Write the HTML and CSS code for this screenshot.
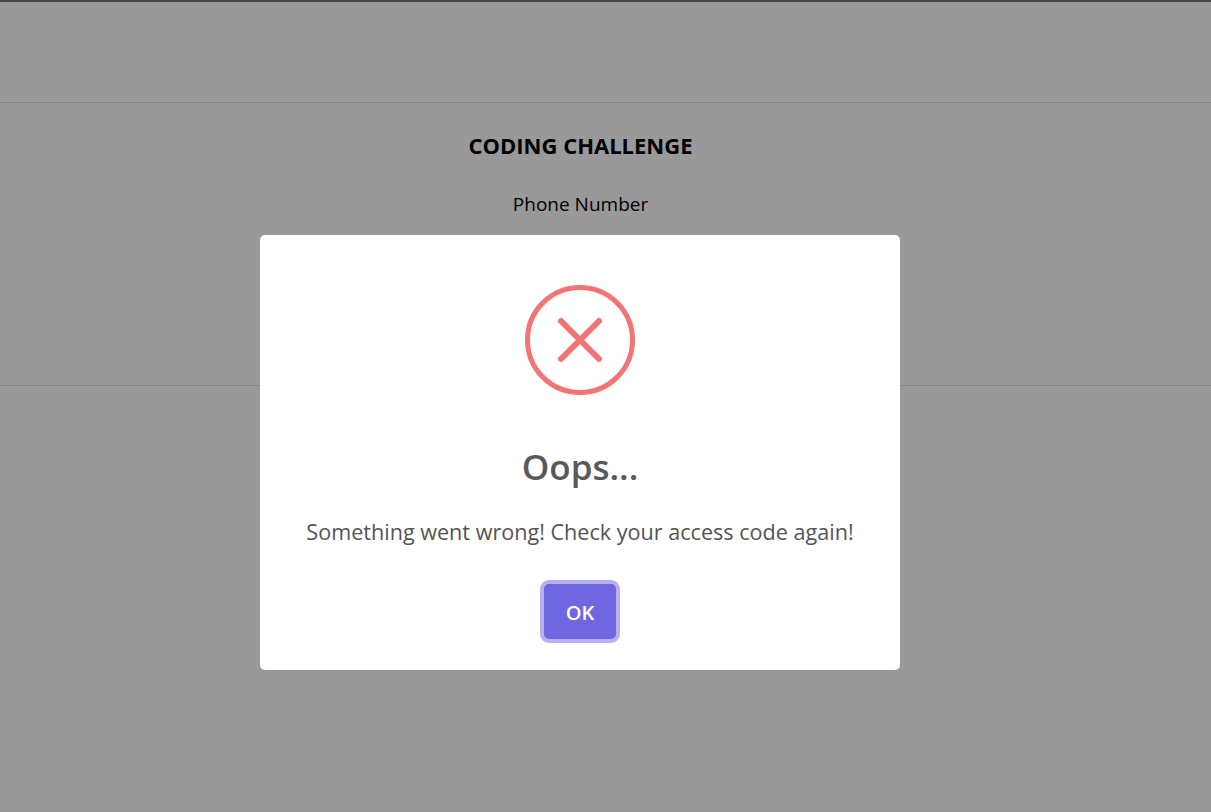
FILE: index.html
```html
<!DOCTYPE html>
<html lang="en">
<head>
    <meta charset="UTF-8">
    <title>Coding Challenge</title>
    <link rel="stylesheet" href="styles.css">
</head>
<body>
    <div class="topbar"></div>
    <div class="form-section">
        <h2>CODING CHALLENGE</h2>
        <p class="label">Phone Number</p>
    </div>

    <div class="overlay">
        <div class="modal">
            <svg class="error-icon" viewBox="0 0 110 110" width="110" height="110">
                <circle cx="55" cy="55" r="52.5" fill="none" stroke="#f27474" stroke-width="5"/>
                <path d="M36 36 L74 74 M74 36 L36 74" stroke="#f27474" stroke-width="6" stroke-linecap="round"/>
            </svg>
            <h3>Oops...</h3>
            <p class="message">Something went wrong! Check your access code again!</p>
            <button class="ok-btn">OK</button>
        </div>
    </div>
</body>
</html>
```

FILE: styles.css
```css
body {
    margin: 0;
    height: 812px;
    overflow: hidden;
    font-family: "Open Sans", "Noto Sans", sans-serif;
    background-color: #fff;
    color: #000;
}
.topbar {
    height: 103px;
    border-top: 2px solid #707070;
    box-sizing: border-box;
    border-bottom: 1px solid #dee2e6;
}
.form-section {
    height: 283px;
    box-sizing: border-box;
    border-bottom: 1px solid #dee2e6;
    text-align: center;
    padding: 28px 50px 0 0;
}
.form-section h2 {
    margin: 0;
    font-size: 22px;
    line-height: 28px;
    font-weight: 700;
}
.label {
    margin: 32px 0 0;
    font-size: 19px;
    line-height: 26px;
}
.overlay {
    position: fixed;
    top: 0;
    left: 0;
    width: 100%;
    height: 100%;
    background-color: rgba(0, 0, 0, 0.4);
    display: flex;
    justify-content: center;
    align-items: flex-start;
    padding: 235px 51px 0 0;
    box-sizing: border-box;
}
.modal {
    width: 640px;
    height: 435px;
    box-sizing: border-box;
    padding-top: 50px;
    background-color: #fff;
    border-radius: 5px;
    display: flex;
    flex-direction: column;
    align-items: center;
}
.error-icon {
    display: block;
}
.modal h3 {
    margin: 50px 0 0;
    font-size: 35px;
    line-height: 44px;
    font-weight: 600;
    color: #595959;
}
.message {
    margin: 28px 0 0;
    font-size: 21.6px;
    line-height: 30px;
    color: #545454;
}
.ok-btn {
    margin-top: 37px;
    width: 72px;
    height: 55px;
    padding: 2px 0 0;
    border: 0;
    border-radius: 5px;
    background-color: #7066e0;
    color: #fff;
    font-family: inherit;
    font-size: 20px;
    font-weight: 600;
    box-shadow: 0 0 0 4px rgba(112, 102, 224, 0.5);
}
```
